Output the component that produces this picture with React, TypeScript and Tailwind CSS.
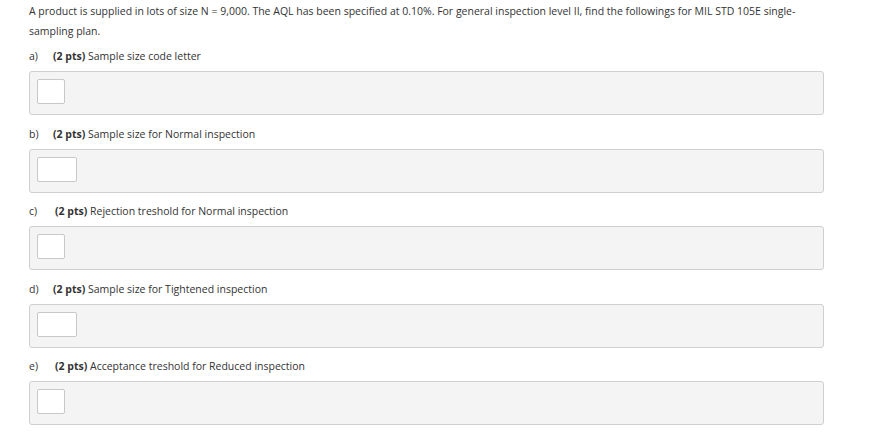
const parts = [
  { letter: "a)", pad: "w-[24px]", text: "Sample size code letter", input: "w-[28px]" },
  { letter: "b)", pad: "w-[24px]", text: "Sample size for Normal inspection", input: "w-[40px]" },
  { letter: "c)", pad: "w-[26px]", text: "Rejection treshold for Normal inspection", input: "w-[28px]" },
  { letter: "d)", pad: "w-[24px]", text: "Sample size for Tightened inspection", input: "w-[40px]" },
  { letter: "e)", pad: "w-[26px]", text: "Acceptance treshold for Reduced inspection", input: "w-[28px]" },
];

export default function App() {
  return (
    <main
      className="min-h-screen bg-white text-[#333] text-[10.5px] pl-[29px] pt-[1px]"
      style={{ fontFamily: '"Open Sans", "Liberation Sans", sans-serif' }}
    >
      <p className="leading-[20px] w-[794px]">
        A product is supplied in lots of size N = 9,000. The AQL has been specified at 0.10%. For general inspection level II, find the followings for MIL STD 105E single-sampling plan.
      </p>

      <div>
        {parts.map((p) => (
          <div key={p.letter} className="h-[77.5px]">
            <div className="flex items-center h-[28px] pt-[4px]">
              <span className={p.pad}>{p.letter}</span>
              <span>
                <b className="font-bold">(2 pts)</b> {p.text}
              </span>
            </div>
            <div className="mt-[2px] w-[795px] h-[44px] bg-[#f4f4f4] border border-[#cfcfcf] rounded-[3px] px-[7px] pt-[7px]">
              <div className={`${p.input} h-[25px] bg-white border border-[#c8c8c8] rounded-[2px]`} />
            </div>
          </div>
        ))}
      </div>
    </main>
  );
}
